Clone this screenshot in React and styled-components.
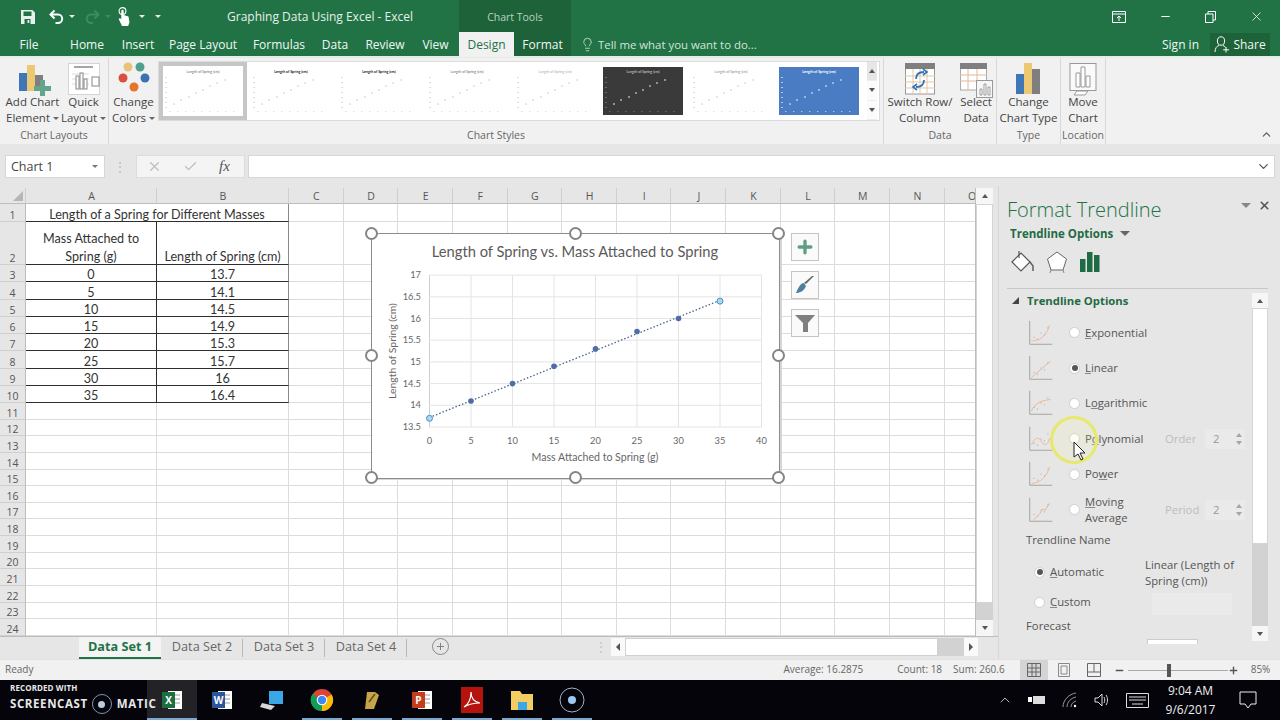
import React from 'react'
import styled, { createGlobalStyle } from 'styled-components'
import { Lightbulb, X, Minus, Plus, ChevronDown, ChevronUp, Check } from 'lucide-react'

const GlobalStyle = createGlobalStyle`
html, body { margin: 0; padding: 0; background: #000; }
* { box-sizing: border-box; }
body { font-family: "Open Sans", "Liberation Sans", sans-serif; }
`

const Window = styled.div`
width: 1280px;
height: 720px;
display: flex;
flex-direction: column;
overflow: hidden;
position: relative;
`

/* ---------- title bar and tabs ---------- */
const TitleBar = styled.div`
height: 33px;
background: #217346;
display: flex;
color: #fff;
font-size: 12px;
`
const Qat = styled.div`
width: 227px;
display: flex;
align-items: center;
padding-left: 21px;
`
const QatSlot = styled.span`
display: flex;
align-items: center;
margin-left: ${p => p.$ml || 0}px;
`
const TinyCaret = styled.span`
display: inline-block;
vertical-align: middle;
width: 0;
height: 0;
border-left: ${p => p.$size || 3}px solid transparent;
border-right: ${p => p.$size || 3}px solid transparent;
border-top: ${p => p.$size || 3}px solid ${p => p.$color || '#e8f2ec'};
margin-left: ${p => p.$ml || 0}px;
margin-right: ${p => p.$gap || 0}px;
`
const DocTitle = styled.div`
width: 232px;
line-height: 33px;
color: #e6f0ea;
`
const ChartTools = styled.div`
width: 112px;
background: #1d6239;
line-height: 34px;
text-align: center;
font-size: 10.5px;
color: #b9d3c3;
`
const WinControls = styled.div`
margin-left: auto;
display: flex;
align-items: center;
padding-right: 16px;
gap: 33px;
`
const TabBar = styled.div`
height: 23px;
background: #217346;
display: flex;
align-items: stretch;
color: #f1f7f3;
font-size: 12px;
`
const Tab = styled.div`
width: ${p => p.$w}px;
display: flex;
align-items: center;
justify-content: center;
background: ${p => p.$active ? '#f1f1f1' : p.$dark ? '#1d6239' : 'transparent'};
color: ${p => p.$active ? '#217346' : 'inherit'};
height: ${p => p.$active ? '25px' : 'auto'};
margin-top: ${p => p.$active ? '-1px' : '0'};
position: relative;
`
const TellMe = styled.div`
display: flex;
align-items: center;
gap: 3px;
margin-left: 9px;
font-size: 11.4px;
color: #d3e4da;
`
const SignIn = styled.div`
margin-left: auto;
line-height: 23px;
margin-right: 11px;
`
const Share = styled.div`
width: 60px;
margin-right: 10px;
background: #1d6239;
display: flex;
align-items: center;
justify-content: center;
gap: 3px;
`

/* ---------- ribbon ---------- */
const Ribbon = styled.div`
height: 88px;
background: #f1f1f1;
border-top: 2px solid #e3ece5;
display: flex;
color: #444;
font-size: 11.5px;
`
const Group = styled.div`
width: ${p => p.$w}px;
border-right: 1px solid #d8d8d8;
display: flex;
flex-direction: column;
`
const GroupBody = styled.div`
flex: 1;
display: flex;
padding-left: ${p => p.$pad || 0}px;
`
const GroupLabel = styled.div`
font-size: 10.5px;
text-align: center;
color: #666;
line-height: 17px;
height: 17px;
`
const RibbonBtn = styled.div`
width: ${p => p.$w}px;
display: flex;
flex-direction: column;
align-items: center;
text-align: center;
line-height: 16px;
white-space: nowrap;
`
const RibbonIcon = styled.div`
height: 36px;
padding-top: 4px;
display: flex;
justify-content: center;
`
const Gallery = styled.div`
width: 722px;
height: 60px;
margin-top: 3px;
background: #fff;
border: 1px solid #dcdcdc;
display: flex;
flex: none;
`
const ThumbSlot = styled.div`
width: 88px;
height: 58px;
display: flex;
align-items: center;
justify-content: center;
border: 4px solid ${p => p.$selected ? '#c6c6c6' : 'transparent'};
`
const GalleryScroll = styled.div`
flex: 1;
display: flex;
flex-direction: column;
padding: 0 2px 0 4px;
`
const GalleryBtn = styled.div`
flex: 1;
display: flex;
align-items: center;
justify-content: center;
background: ${p => p.$off ? '#e6e6e6' : '#fbfbfb'};
border-bottom: 1px solid #eee;
`
const Collapse = styled.div`
flex: 1;
display: flex;
align-items: flex-end;
justify-content: flex-end;
padding: 0 7px 3px 0;
`

/* ---------- formula bar ---------- */
const FormulaBar = styled.div`
height: 42px;
background: #e6e6e6;
display: flex;
align-items: center;
padding: 3px 5px 0;
color: #444;
`
const NameBox = styled.div`
width: 100px;
height: 23px;
background: #fff;
border: 1px solid #d6d6d6;
display: flex;
align-items: center;
justify-content: space-between;
padding: 0 6px 0 5px;
font-size: 12.5px;
`
const Grip = styled.div`
width: 31px;
display: flex;
justify-content: center;
color: #bbb;
font-size: 12px;
letter-spacing: 1px;
`
const FxBox = styled.div`
width: 109px;
height: 23px;
background: #f4f4f4;
border: 1px solid #dcdcdc;
display: flex;
align-items: center;
gap: 21px;
padding-left: 10px;
color: #bdbdbd;
`
const FxMark = styled.span`
font-family: "Liberation Serif", serif;
font-style: italic;
font-size: 15px;
color: #555;
`
const FormulaInput = styled.div`
flex: 1;
height: 23px;
margin-left: 3px;
background: #fff;
border: 1px solid #d6d6d6;
display: flex;
align-items: center;
justify-content: flex-end;
padding-right: 3px;
`

/* ---------- work area ---------- */
const Main = styled.div`
height: 473px;
display: flex;
position: relative;
`
const Workspace = styled.div`
width: 998px;
background: #e6e6e6;
display: flex;
flex-direction: column;
`
const SheetRow = styled.div`
height: 450px;
display: flex;
padding-top: 2px;
position: relative;
`
const SheetGrid = styled.div`
width: 976px;
height: 448px;
overflow: hidden;
display: grid;
grid-template-columns: 26px 131px 132px repeat(13, 54.65px);
grid-template-rows: 16px 17.5px 43.5px repeat(8, 17.25px) repeat(14, 16.64px);
background: #fff;
border-right: 1px solid #bdbdbd;
font-family: Lato, "Liberation Sans", sans-serif;
font-size: 12.6px;
color: #333;
`
const Corner = styled.div`
background: #e6e6e6;
border-right: 1px solid #cfcfcf;
border-bottom: 1px solid #bdbdbd;
position: relative;
&::after {
  content: '';
  position: absolute;
  right: 2px;
  bottom: 2px;
  border-left: 10px solid transparent;
  border-bottom: 10px solid #b6b6b6;
}
`
const ColHead = styled.div`
background: #e6e6e6;
border-right: 1px solid #cfcfcf;
border-bottom: 1px solid #bdbdbd;
text-align: center;
padding: 1px 0 0 1px;
font-family: "Open Sans", sans-serif;
font-size: 10.5px;
line-height: 15px;
color: #555;
`
const RowHead = styled.div`
background: #e6e6e6;
border-right: 1px solid #bdbdbd;
border-bottom: 1px solid #cfcfcf;
display: flex;
align-items: flex-end;
justify-content: center;
font-family: "Open Sans", sans-serif;
font-size: 10.5px;
line-height: 11px;
color: #555;
`
const Cell = styled.div`
border-right: 1px solid #dcdcdc;
border-bottom: 1px solid #dcdcdc;
`
const DataCell = styled.div`
grid-column: ${p => p.$span ? 'span 2' : 'auto'};
border-right: 1px solid ${p => p.$rule || '#2e2e2e'};
border-bottom: 1px solid #2e2e2e;
display: flex;
align-items: ${p => p.$top !== undefined ? 'flex-start' : 'flex-end'};
justify-content: center;
text-align: center;
line-height: ${p => p.$top !== undefined ? 18 : 13}px;
padding: ${p => p.$top || 0}px 4px 0;
`
const VScroll = styled.div`
width: 17px;
height: 448px;
background: #d2d2d2;
display: flex;
flex-direction: column;
`
const ScrollBtn = styled.div`
height: ${p => p.$h || 16}px;
flex: none;
display: flex;
align-items: center;
justify-content: center;
background: ${p => p.$bg || '#f6f6f6'};
`
const ScrollThumb = styled.div`
height: ${p => p.$h}px;
flex: none;
background: #fff;
border: 1px solid #d4d4d4;
`
const ScrollGap = styled.div`
flex: 1;
`
const Arrow = styled.span`
width: 0;
height: 0;
border-left: 3.5px solid transparent;
border-right: 3.5px solid transparent;
border-top: ${p => p.$up ? 'none' : '4px solid #555'};
border-bottom: ${p => p.$up ? '4px solid #555' : 'none'};
`
const SideArrow = styled.span`
width: 0;
height: 0;
border-top: 4px solid transparent;
border-bottom: 4px solid transparent;
border-left: ${p => p.$left ? 'none' : '4px solid #555'};
border-right: ${p => p.$left ? '4px solid #555' : 'none'};
`

/* ---------- chart overlay ---------- */
const ChartFrame = styled.div`
position: absolute;
left: 371px;
top: 47px;
width: 409px;
height: 246px;
background: #fff;
border: 1px solid #8c8c8c;
box-shadow: 2px 1px 0 #d6d6d6;
`
const Handle = styled.span`
position: absolute;
left: ${p => p.$x}%;
top: ${p => p.$y}%;
width: 13px;
height: 13px;
margin: -7px 0 0 -7px;
border-radius: 50%;
background: #fff;
border: 2px solid #858585;
`
const ChartTool = styled.div`
position: absolute;
left: 791px;
top: ${p => p.$top}px;
width: 28px;
height: 28px;
background: #fafafa;
border: 1px solid #c4c4c4;
display: flex;
align-items: center;
justify-content: center;
`

/* ---------- sheet tabs ---------- */
const SheetTabs = styled.div`
height: 23px;
display: flex;
align-items: stretch;
background: #e6e6e6;
border-top: 1px solid #bdbdbd;
font-size: 12.7px;
color: #666;
padding-left: 79px;
`
const SheetTab = styled.div`
width: 82px;
display: flex;
align-items: center;
justify-content: center;
padding-bottom: ${p => p.$active ? 3 : 5}px;
background: ${p => p.$active ? '#f4f4f4' : 'transparent'};
color: ${p => p.$active ? '#217346' : '#666'};
font-weight: ${p => p.$active ? 700 : 400};
border-bottom: ${p => p.$active ? '2px solid #217346' : 'none'};
position: relative;
&::after {
  content: '';
  display: ${p => p.$active ? 'none' : 'block'};
  position: absolute;
  right: 0;
  top: 2px;
  bottom: 2px;
  width: 1px;
  background: #b8b8b8;
}
`
const AddSheet = styled.div`
width: 17px;
height: 17px;
margin: 1px 0 0 25px;
border: 1px solid #888;
border-radius: 50%;
display: flex;
align-items: center;
justify-content: center;
`
const SheetDots = styled.div`
margin-left: 146px;
width: 16px;
color: #c4c4c4;
line-height: 20px;
font-size: 12px;
`
const HScroll = styled.div`
display: flex;
align-items: stretch;
height: 18px;
margin-top: 1px;
width: 367px;
`
const HThumb = styled.div`
flex: ${p => p.$grow};
background: ${p => p.$bg};
border: ${p => p.$bg === '#fff' ? '1px solid #d0d0d0' : 'none'};
`
const HBtn = styled.div`
width: 14px;
background: #fafafa;
display: flex;
align-items: center;
justify-content: center;
`

/* ---------- task pane ---------- */
const Panel = styled.div`
width: 282px;
background: #e6e6e6;
border-left: 1px solid #d6d6d6;
position: relative;
padding-left: 8px;
display: flex;
flex-direction: column;
color: #555;
font-size: 11.3px;
`
const PanelHead = styled.div`
height: 33px;
display: flex;
align-items: center;
padding-top: 13px;
padding-right: 9px;
`
const PanelTitle = styled.div`
font-size: 20px;
font-weight: 300;
color: #217346;
flex: 1;
white-space: nowrap;
`
const PanelActions = styled.div`
display: flex;
align-items: center;
gap: 7px;
margin-bottom: 8px;
`
const SubTitle = styled.div`
display: flex;
align-items: center;
gap: 7px;
height: 24px;
padding: 5px 0 0 3px;
font-weight: 700;
font-size: 11.5px;
color: #1f6b43;
`
const IconTabs = styled.div`
height: 38px;
display: flex;
align-items: center;
gap: 11px;
padding: 0 0 0 3px;
`
const ScrollArea = styled.div`
width: 261px;
margin-top: 7px;
height: 356px;
border-top: 1px solid #c8c8c8;
padding-top: 4px;
display: flex;
`
const PaneBody = styled.div`
width: 245px;
height: 351px;
overflow: hidden;
`
const SectionHead = styled.div`
height: 22px;
display: flex;
align-items: center;
gap: 8px;
padding: 0 0 7px 5px;
font-weight: 700;
color: #1f6b43;
`
const HeadTriangle = styled.span`
width: 0;
height: 0;
border-left: 7px solid transparent;
border-bottom: 7px solid #444;
`
const TrendRow = styled.div`
height: 35.4px;
display: flex;
align-items: center;
padding-left: 20px;
`
const Radio = styled.span`
width: 11px;
height: 11px;
flex: none;
border-radius: 50%;
background: #fff;
border: 1px solid #cfcfcf;
display: flex;
align-items: center;
justify-content: center;
margin-left: ${p => p.$ml ?? 14}px;
&::after {
  content: '';
  display: ${p => p.$on ? 'block' : 'none'};
  width: 6px;
  height: 6px;
  border-radius: 50%;
  background: #555;
}
`
const RadioLabel = styled.span`
width: 80px;
margin-left: 5px;
line-height: 16px;
flex: none;
`
const Key = styled.span`
text-decoration: underline;
text-decoration-color: #888;
`
const GhostLabel = styled.span`
width: 40px;
color: #bdbdbd;
`
const GhostSpin = styled.span`
width: 40px;
height: 20px;
background: #eaeaea;
color: #999;
display: flex;
align-items: center;
justify-content: space-between;
padding: 0 3px 0 8px;
`
const SpinMarks = styled.span`
display: flex;
flex-direction: column;
gap: 4px;
opacity: 0.45;
`
const FieldLabel = styled.div`
height: 18px;
line-height: 18px;
padding-left: 19px;
margin-top: 4px;
`
const NameBlock = styled.div`
display: flex;
padding-left: 27px;
height: 63px;
margin-top: 1px;
`
const NameChoices = styled.div`
width: 111px;
display: flex;
flex-direction: column;
padding-top: 7px;
flex: none;
`
const NameChoice = styled.div`
height: 30px;
flex: none;
display: flex;
align-items: center;
`
const NameText = styled.div`
width: 100px;
line-height: 16px;
padding-top: 7px;
`
const GhostField = styled.div`
width: 80px;
height: 22px;
margin: 4px 0 0 7px;
background: #eaeaea;
`
const ForecastStub = styled.div`
width: 51px;
height: 14px;
margin: 4px 0 0 140px;
background: #fff;
border: 1px solid #ccc;
`
const PaneScroll = styled.div`
width: 16px;
height: 348px;
display: flex;
flex-direction: column;
background: #d2d2d2;
`
const Highlight = styled.div`
position: absolute;
left: 51px;
top: 230px;
width: 48px;
height: 48px;
border-radius: 50%;
border: 3px solid #e6e96a;
background: rgba(240, 240, 170, 0.16);
pointer-events: none;
`
const CursorMark = styled.svg`
position: absolute;
left: 74px;
top: 255px;
pointer-events: none;
`

/* ---------- status bar and taskbar ---------- */
const StatusBar = styled.div`
height: 21px;
background: #f1f1f1;
border-top: 1px solid #e0e0e0;
display: flex;
align-items: center;
font-size: 10px;
color: #666;
padding-left: 5px;
`
const StatusText = styled.span`
margin-left: ${p => p.$ml}px;
padding-bottom: 2px;
white-space: nowrap;
`
const ViewBtn = styled.div`
width: 28px;
height: 21px;
margin-left: ${p => p.$ml || 0}px;
background: ${p => p.$on ? '#d4d4d4' : 'transparent'};
display: flex;
align-items: center;
justify-content: center;
`
const ZoomTrack = styled.div`
width: 100px;
height: 1px;
background: #aaa;
margin: 0 0 0 3px;
position: relative;
`
const ZoomThumb = styled.span`
position: absolute;
left: 39px;
top: -6px;
width: 4px;
height: 13px;
background: #555;
`
const TaskBar = styled.div`
height: 40px;
background: #04040a;
display: flex;
align-items: center;
color: #fff;
position: relative;
`
const Stamp = styled.div`
width: 147px;
height: 40px;
flex: none;
padding: 2px 0 0 10px;
font-weight: 700;
font-size: 8px;
line-height: 11px;
letter-spacing: 0.1px;
color: #e8e8e8;
white-space: nowrap;
position: relative;
z-index: 1;
`
const StampLine = styled.div`
display: flex;
align-items: center;
font-size: 11.5px;
font-weight: 700;
line-height: 22px;
letter-spacing: 0.6px;
`
const StampDot = styled.span`
width: 20px;
height: 20px;
flex: none;
border: 1px solid #7e97ad;
border-radius: 50%;
margin: 0 5px 0 4px;
display: flex;
align-items: center;
justify-content: center;
&::after {
  content: '';
  width: 7px;
  height: 7px;
  border-radius: 50%;
  background: #b5cde0;
}
`
const TaskIcon = styled.div`
width: 50px;
height: 40px;
flex: none;
display: flex;
align-items: center;
justify-content: center;
background: ${p => p.$active ? '#222227' : 'transparent'};
position: relative;
&::after {
  content: '';
  display: ${p => p.$open ? 'block' : 'none'};
  position: absolute;
  bottom: 0;
  height: 2px;
  left: ${p => p.$active ? 0 : 5}px;
  right: ${p => p.$active ? 0 : 5}px;
  background: #7da9d0;
}
`
const Tray = styled.div`
margin-left: auto;
display: flex;
align-items: center;
padding-right: 12px;
`
const TrayItem = styled.div`
width: ${p => p.$w}px;
display: flex;
justify-content: center;
`
const Clock = styled.div`
width: 75px;
text-align: center;
font-size: 12px;
line-height: 19px;
color: #eee;
margin-left: -4px;
`

/* ---------- drawings ---------- */
function SaveIcon() {
  return (
    <svg width="14" height="14" viewBox="0 0 14 14">
      <path d="M0 0h11.5L14 2.5V14H0z" fill="#e8f2ec" />
      <rect x="2.5" y="1.5" width="8" height="4.5" fill="#217346" />
      <rect x="3.5" y="9" width="6" height="5" fill="#217346" />
      <rect x="6.5" y="10" width="1.8" height="3" fill="#e8f2ec" />
    </svg>
  )
}

function UndoIcon() {
  return (
    <svg width="15" height="15" viewBox="0 0 15 15">
      <path d="M1.5 5.5h7.5a4.2 4.2 0 0 1 0 8.4H6.5" fill="none" stroke="#fff" strokeWidth="2" />
      <path d="M5.5 1.5l-4 4 4 4" fill="none" stroke="#fff" strokeWidth="2" />
    </svg>
  )
}

function RedoIcon() {
  return (
    <svg width="15" height="15" viewBox="0 0 15 15">
      <path d="M13.5 5.5H6a4.2 4.2 0 0 0 0 8.4h2" fill="none" stroke="#3f8a60" strokeWidth="2" />
      <path d="M9.5 1.5l4 4-4 4" fill="none" stroke="#3f8a60" strokeWidth="2" />
    </svg>
  )
}

function TouchIcon() {
  return (
    <svg width="12" height="20" viewBox="0 0 12 20">
      <circle cx="4.5" cy="4" r="3.4" fill="none" stroke="#fff" strokeWidth="1.1" />
      <path d="M3.3 4a1.2 1.2 0 0 1 2.4 0v4l4.8 1.4 1 6-1.4 3.6H4L.7 12l1.3-1 1.3 1.5z" fill="#fff" />
    </svg>
  )
}

function ShareUserIcon() {
  return (
    <svg width="16" height="17" viewBox="0 0 16 17">
      <ellipse cx="7" cy="5" rx="3.6" ry="4.2" fill="none" stroke="#fff" />
      <path d="M1 16c0-4 2-6 4-6.5M9 9.5c1 .3 2 1 2.4 2" fill="none" stroke="#fff" />
      <path d="M12 11v5.5M9.2 13.8H15" stroke="#fff" />
    </svg>
  )
}

function AddChartIcon() {
  return (
    <svg width="36" height="34" viewBox="0 0 36 34">
      <rect x="4" y="11" width="8" height="18" fill="#3f76b5" />
      <rect x="12" y="3" width="8" height="26" fill="#edc873" />
      <rect x="20" y="13" width="8" height="16" fill="#7f7f7f" />
      <path d="M25 18h5v6h6v5h-6v5h-5v-5h-6v-5h6z" fill="#62a58a" />
    </svg>
  )
}

function QuickLayoutIcon() {
  return (
    <svg width="34" height="34" viewBox="0 0 34 34">
      <rect x="1.5" y="1.5" width="31" height="31" fill="#fff" stroke="#d5d5d5" />
      <path d="M7 5h19" stroke="#888" strokeWidth="1.5" />
      <path d="M5 12h17M5 17h17M5 22h17" stroke="#ddd" />
      <rect x="9" y="14" width="3" height="13" fill="#fff" stroke="#888" />
      <rect x="13" y="11" width="3" height="16" fill="#fff" stroke="#888" />
      <rect x="17" y="17" width="3" height="10" fill="#fff" stroke="#888" />
      <rect x="25" y="15" width="7" height="9" fill="#fff" stroke="#888" />
    </svg>
  )
}

function ColorsIcon() {
  return (
    <svg width="32" height="32" viewBox="0 0 32 32">
      <circle cx="10" cy="5" r="4.5" fill="#e9c27a" />
      <circle cx="22" cy="5" r="4.5" fill="#4f9e8f" />
      <circle cx="5" cy="16" r="4.5" fill="#d9503c" />
      <circle cx="27" cy="16" r="4.5" fill="#3a73b4" />
      <circle cx="16" cy="25" r="4.5" fill="#e3762b" />
    </svg>
  )
}

function SwitchIcon() {
  return (
    <svg width="32" height="34" viewBox="0 0 32 34">
      <rect x="1.5" y="2" width="29" height="30" fill="#fff" stroke="#999" />
      <rect x="1" y="1" width="30" height="6" fill="#7f7f7f" />
      <path d="M1 14h30M1 20h30M1 26h30M9 7v25M16 7v25M23 7v25" stroke="#e3c6a4" />
      <path d="M20 10c-6 0-8 3-8 7M12 25c6 0 8-3 8-7" fill="none" stroke="#2f75b5" strokeWidth="1.8" />
      <path d="M19 7l4 3-4 3M13 22l-4 3 4 3" fill="none" stroke="#2f75b5" strokeWidth="1.6" />
    </svg>
  )
}

function SelectDataIcon() {
  return (
    <svg width="34" height="36" viewBox="0 0 34 36">
      <rect x="1.5" y="2" width="26" height="26" fill="#fff" stroke="#aaa" />
      <rect x="1" y="1" width="27" height="6" fill="#7f7f7f" />
      <path d="M1 13h27M1 19h27M9 7v21M18 7v21" stroke="#e3b899" />
      <rect x="17.5" y="18.5" width="16" height="17" fill="#f6f6f6" stroke="#999" />
      <path d="M21 33v-6h2v6zM25 33v-11h2v11zM29 33v-8h2v8z" fill="#fff" stroke="#888" strokeWidth="0.8" />
    </svg>
  )
}

function ChangeTypeIcon() {
  return (
    <svg width="30" height="34" viewBox="0 0 30 34">
      <rect x="2" y="12" width="8" height="20" fill="#3f76b5" />
      <rect x="10" y="1" width="8" height="31" fill="#edc873" />
      <rect x="18" y="7" width="8" height="25" fill="#7f7f7f" />
    </svg>
  )
}

function MoveChartIcon() {
  return (
    <svg width="30" height="34" viewBox="0 0 30 34">
      <rect x="2" y="1.5" width="26" height="27" fill="#fafafa" stroke="#999" />
      <path d="M8 25V11h4v14zM13 25V5h4v20zM18 25V14h4v11z" fill="#fff" stroke="#999" />
      <path d="M6 33h11l3-4H9z" fill="#fff" stroke="#999" />
    </svg>
  )
}

const thumbDots = [[11, 37], [18, 33], [26, 30], [33, 26], [40, 23], [47, 19], [54, 16], [62, 13]]
const thumbTicksY = [10, 15, 20, 25, 30, 35, 40]
const thumbTicksX = [6, 14, 22, 30, 38, 46, 54, 62, 70]

function Thumb({ bg = '#fff', dot = '#c0c6d2', title = '#666', weight = 400, tick = '#d6d6d6' }) {
  return (
    <svg width="80" height="48" viewBox="0 0 80 48">
      <rect width="80" height="48" fill={bg} />
      <text x="40" y="6" textAnchor="middle" fontSize="3.6" fontWeight={weight} fill={title} fontFamily="Lato, sans-serif">Length of Spring (cm)</text>
      {thumbTicksY.map(y => <rect key={y} x="2" y={y} width="2" height="0.8" fill={tick} />)}
      {thumbTicksX.map(x => <rect key={x} x={x} y="44" width="1.4" height="0.8" fill={tick} />)}
      {thumbDots.map(([x, y]) => <circle key={x} cx={x} cy={y} r="0.8" fill={dot} />)}
    </svg>
  )
}

const trendPaths = {
  exp: 'M3 24c9 0 16-4 21-18',
  linear: 'M3 26L25 7',
  log: 'M3 24c4-8 10-12 22-13',
  poly: 'M3 22c5-11 9-9 12-3 4 5 7 2 9-5',
  power: 'M3 26c10-1 17-7 21-19',
  moving: 'M5 27l7-7 4-6 3 1 5-8',
}

function TrendIcon({ kind }) {
  return (
    <svg width="28" height="26" viewBox="0 0 28 30" style={{ flex: 'none' }}>
      <path d="M1 1v27h26" fill="none" stroke="#9a9a9a" strokeWidth="1" />
      <path d={trendPaths[kind]} fill="none" stroke="#eeb18a" strokeWidth="1" />
      {[[6, 20], [10, 22], [14, 15], [18, 17], [22, 9]].map(([x, y]) => (
        <circle key={x} cx={x} cy={y} r="0.7" fill="#9aa8b8" />
      ))}
    </svg>
  )
}

function BucketIcon() {
  return (
    <svg width="24" height="24" viewBox="0 0 24 24">
      <path d="M2 12l9-9 9 9-9 9z" fill="#fff" stroke="#555" strokeWidth="1.2" />
      <path d="M9 1v7" stroke="#555" strokeWidth="1.2" />
      <path d="M20 12l3 4v5" fill="none" stroke="#666" strokeWidth="1.6" />
    </svg>
  )
}

function PentagonIcon() {
  return (
    <svg width="24" height="24" viewBox="0 0 24 24">
      <path d="M12 2l9.5 7-3.5 11H6L2.5 9z" fill="#fff" stroke="#666" strokeWidth="1" />
      <path d="M6 20l-1 3M18 20l1 3" stroke="#888" />
    </svg>
  )
}

function BarsIcon() {
  return (
    <svg width="20" height="22" viewBox="0 0 20 22">
      <path d="M0 8h5.5v13H0zM7 1h5.5v20H7zM14 4h5.5v17H14z" fill="#1f6b43" />
    </svg>
  )
}

function RestoreDisplayIcon() {
  return (
    <svg width="14" height="12" viewBox="0 0 14 12">
      <path d="M.5.5h13v11H.5zM.5 3h13M7 10V5M5 7l2-2 2 2" fill="none" stroke="#fff" />
    </svg>
  )
}

function RestoreIcon() {
  return (
    <svg width="11" height="12" viewBox="0 0 11 12">
      <path d="M.5 3h7.5v8.5H.5zM3 3V.5h7.5V9H8" fill="none" stroke="#fff" />
    </svg>
  )
}

const xAt = v => 429.5 + v * 8.3
const yAt = v => 427 - (v - 13.5) * 43.4
const points = [[0, 13.7], [5, 14.1], [10, 14.5], [15, 14.9], [20, 15.3], [25, 15.7], [30, 16], [35, 16.4]]
const yTicks = [13.5, 14, 14.5, 15, 15.5, 16, 16.5, 17]
const xTicks = [0, 5, 10, 15, 20, 25, 30, 35, 40]
const chartFont = 'Lato, "Liberation Sans", sans-serif'

function SpringChart() {
  return (
    <svg width="407" height="244" viewBox="372 234 407 244" style={{ display: 'block' }} fontFamily={chartFont}>
      <text x="575" y="257" textAnchor="middle" fontSize="14.7" fill="#5a5a5a">Length of Spring vs. Mass Attached to Spring</text>
      {xTicks.map(t => <line key={t} x1={xAt(t)} x2={xAt(t)} y1="275" y2="427" stroke={t === 0 ? '#cfcfcf' : '#e4e4e4'} />)}
      {yTicks.map(t => <line key={t} x1="429" x2="762" y1={yAt(t)} y2={yAt(t)} stroke="#e4e4e4" />)}
      {yTicks.map(t => <text key={t} x="421" y={yAt(t) + 3} textAnchor="end" fontSize="9.3" fill="#666">{t}</text>)}
      {xTicks.map(t => <text key={t} x={xAt(t)} y="444" textAnchor="middle" fontSize="9.3" fill="#666">{t}</text>)}
      <text x="595" y="461" textAnchor="middle" fontSize="10.6" fill="#666">Mass Attached to Spring (g)</text>
      <text transform="translate(396 351) rotate(-90)" textAnchor="middle" fontSize="10.4" fill="#666">Length of Spring (cm)</text>
      <line x1={xAt(0)} y1={yAt(13.72)} x2={xAt(35)} y2={yAt(16.42)} stroke="#4a5f8c" strokeWidth="1.3" strokeDasharray="1.5 2" />
      {points.map(([x, y], i) => {
        const edge = i === 0 || i === points.length - 1
        return <circle key={x} cx={xAt(x)} cy={yAt(y)} r={edge ? 3 : 2.8} fill={edge ? '#a9d8f5' : '#4f6ea8'} stroke={edge ? '#4f8ec2' : 'none'} strokeWidth="1" />
      })}
    </svg>
  )
}

function TinyTile({ bg, letter, side = '#fff' }) {
  return (
    <svg width="20" height="22" viewBox="0 0 20 22">
      <rect x="6" y="2" width="14" height="18" fill={side} />
      <path d="M11 6h7M11 10h7M11 14h7" stroke="#999" />
      <rect y="3" width="13" height="16" fill={bg} />
      <text x="6.5" y="15" textAnchor="middle" fontSize="10" fontWeight="700" fill="#fff" fontFamily="Open Sans, sans-serif">{letter}</text>
    </svg>
  )
}

function TaskIcons() {
  return (
    <>
      <TaskIcon $active $open><TinyTile bg="#1d6f42" letter="X" /></TaskIcon>
      <TaskIcon><TinyTile bg="#2b579a" letter="W" /></TaskIcon>
      <TaskIcon>
        <svg width="24" height="24" viewBox="0 0 24 24">
          <path d="M9 3h14v13H9z" fill="#3ba7e6" />
          <path d="M2 15l13 3-4 4-11-3z" fill="#d8d8d8" />
        </svg>
      </TaskIcon>
      <TaskIcon $open>
        <svg width="24" height="24" viewBox="0 0 24 24">
          <circle cx="12" cy="12" r="11" fill="#db4437" />
          <path d="M12 12L2.5 6A11 11 0 0 0 12 23z" fill="#0f9d58" />
          <path d="M12 12l9.6-5.5A11 11 0 0 1 12 23z" fill="#fbbc05" />
          <circle cx="12" cy="12" r="5.3" fill="#fff" />
          <circle cx="12" cy="12" r="4.2" fill="#4285f4" />
        </svg>
      </TaskIcon>
      <TaskIcon $open>
        <svg width="16" height="20" viewBox="0 0 16 20">
          <path d="M3 2h8l4 3-5 14H1z" fill="#c7a44a" />
          <path d="M5 12l6-8" stroke="#5a4a1a" strokeWidth="1.4" />
        </svg>
      </TaskIcon>
      <TaskIcon $open><TinyTile bg="#c43e1c" letter="P" /></TaskIcon>
      <TaskIcon $open>
        <svg width="22" height="26" viewBox="0 0 22 26">
          <rect width="22" height="26" fill="#b7130e" />
          <path d="M3 20c5-3 7-9 7-15 0 6 3 10 9 11-6 0-11 1-16 4z" fill="none" stroke="#fff" strokeWidth="1.2" />
        </svg>
      </TaskIcon>
      <TaskIcon $open>
        <svg width="24" height="22" viewBox="0 0 24 22">
          <path d="M1 2h9l2 3h11v16H1z" fill="#f3cd62" />
          <rect x="8" y="13" width="9" height="8" fill="#3ba7e6" />
        </svg>
      </TaskIcon>
      <TaskIcon $open>
        <svg width="26" height="26" viewBox="0 0 26 26">
          <circle cx="13" cy="13" r="12" fill="none" stroke="#9bb3c7" />
          <circle cx="13" cy="13" r="4" fill="#9cc9ee" />
        </svg>
      </TaskIcon>
    </>
  )
}

const columns = ['A', 'B', 'C', 'D', 'E', 'F', 'G', 'H', 'I', 'J', 'K', 'L', 'M', 'N', 'O']
const tableRows = [[0, 13.7], [5, 14.1], [10, 14.5], [15, 14.9], [20, 15.3], [25, 15.7], [30, 16], [35, 16.4]]
const handles = [[0, 0], [50, 0], [100, 0], [0, 50], [100, 50], [0, 100], [50, 100], [100, 100]]
const ribbonTabs = [['Home', 58], ['Insert', 44], ['Page Layout', 86], ['Formulas', 66], ['Data', 46], ['Review', 54], ['View', 47]]

function Blanks({ from = 3, row }) {
  return columns.slice(from - 1).map(c => <Cell key={row + c} />)
}

function Sheet() {
  const rows = []
  rows.push(
    <React.Fragment key="r1">
      <RowHead>1</RowHead>
      <DataCell $span $rule="#8a8a8a">Length of a Spring for Different Masses</DataCell>
      <Blanks row={1} />
    </React.Fragment>,
    <React.Fragment key="r2">
      <RowHead>2</RowHead>
      <DataCell $top={8.5}>Mass Attached to Spring (g)</DataCell>
      <DataCell $top={26.5} $rule="#8a8a8a">Length of Spring (cm)</DataCell>
      <Blanks row={2} />
    </React.Fragment>
  )
  tableRows.forEach(([mass, len], i) => {
    rows.push(
      <React.Fragment key={'d' + i}>
        <RowHead>{i + 3}</RowHead>
        <DataCell>{mass}</DataCell>
        <DataCell $rule="#8a8a8a">{len}</DataCell>
        <Blanks row={i + 3} />
      </React.Fragment>
    )
  })
  for (let n = 11; n <= 24; n++) {
    rows.push(
      <React.Fragment key={'e' + n}>
        <RowHead>{n}</RowHead>
        <Blanks from={1} row={n} />
      </React.Fragment>
    )
  }
  return (
    <SheetGrid>
      <Corner />
      {columns.map(c => <ColHead key={c}>{c}</ColHead>)}
      {rows}
    </SheetGrid>
  )
}

function OptionRow({ kind, label, on, ghost, value }) {
  return (
    <TrendRow>
      <TrendIcon kind={kind} />
      <Radio $on={on} />
      <RadioLabel>{label}</RadioLabel>
      {ghost && <GhostLabel>{ghost}</GhostLabel>}
      {ghost && (
        <GhostSpin>
          {value}
          <SpinMarks><Arrow $up /><Arrow /></SpinMarks>
        </GhostSpin>
      )}
    </TrendRow>
  )
}

export default function App() {
  return (
    <Window>
      <GlobalStyle />
      <TitleBar>
        <Qat>
          <QatSlot><SaveIcon /></QatSlot>
          <QatSlot $ml={14}><UndoIcon /></QatSlot>
          <TinyCaret $ml={5} />
          <QatSlot $ml={10}><RedoIcon /></QatSlot>
          <TinyCaret $ml={5} $color="#3f8a60" />
          <QatSlot $ml={7}><TouchIcon /></QatSlot>
          <TinyCaret $ml={9} />
          <TinyCaret $ml={10} />
        </Qat>
        <DocTitle>Graphing Data Using Excel - Excel</DocTitle>
        <ChartTools>Chart Tools</ChartTools>
        <WinControls>
          <RestoreDisplayIcon />
          <Minus size={13} color="#fff" />
          <RestoreIcon />
          <X size={15} color="#fff" strokeWidth={1.2} />
        </WinControls>
      </TitleBar>
      <TabBar>
        <Tab $w={58}>File</Tab>
        {ribbonTabs.map(([name, w]) => <Tab key={name} $w={w}>{name}</Tab>)}
        <Tab $w={55} $active>Design</Tab>
        <Tab $w={57} $dark>Format</Tab>
        <TellMe>
          <Lightbulb size={15} strokeWidth={1.3} />
          Tell me what you want to do...
        </TellMe>
        <SignIn>Sign in</SignIn>
        <Share><ShareUserIcon />Share</Share>
      </TabBar>
      <Ribbon>
        <Group $w={109}>
          <GroupBody $pad={3}>
            <RibbonBtn $w={59}>
              <RibbonIcon><AddChartIcon /></RibbonIcon>
              <span>Add Chart</span>
              <span>Element <TinyCaret $color="#666" /></span>
            </RibbonBtn>
            <RibbonBtn $w={43}>
              <RibbonIcon><QuickLayoutIcon /></RibbonIcon>
              <span>Quick</span>
              <span>Layout <TinyCaret $color="#666" /></span>
            </RibbonBtn>
          </GroupBody>
          <GroupLabel>Chart Layouts</GroupLabel>
        </Group>
        <Group $w={775}>
          <GroupBody>
            <RibbonBtn $w={49}>
              <RibbonIcon><ColorsIcon /></RibbonIcon>
              <span>Change</span>
              <span>Colors <TinyCaret $color="#666" /></span>
            </RibbonBtn>
            <Gallery>
              <ThumbSlot $selected><Thumb /></ThumbSlot>
              <ThumbSlot><Thumb weight={700} title="#222" /></ThumbSlot>
              <ThumbSlot><Thumb weight={700} title="#222" /></ThumbSlot>
              <ThumbSlot><Thumb /></ThumbSlot>
              <ThumbSlot><Thumb title="#aaa" /></ThumbSlot>
              <ThumbSlot><Thumb bg="#3a3a3a" title="#ddd" dot="#fff" tick="#777" /></ThumbSlot>
              <ThumbSlot><Thumb title="#888" /></ThumbSlot>
              <ThumbSlot><Thumb bg="#4a7cc4" title="#fff" dot="#fff" weight={700} tick="#cddcf0" /></ThumbSlot>
              <GalleryScroll>
                <GalleryBtn $off><Arrow $up /></GalleryBtn>
                <GalleryBtn><Arrow /></GalleryBtn>
                <GalleryBtn><Arrow /></GalleryBtn>
              </GalleryScroll>
            </Gallery>
          </GroupBody>
          <GroupLabel>Chart Styles</GroupLabel>
        </Group>
        <Group $w={113}>
          <GroupBody>
            <RibbonBtn $w={72}>
              <RibbonIcon><SwitchIcon /></RibbonIcon>
              <span>Switch Row/</span>
              <span>Column</span>
            </RibbonBtn>
            <RibbonBtn $w={40}>
              <RibbonIcon><SelectDataIcon /></RibbonIcon>
              <span>Select</span>
              <span>Data</span>
            </RibbonBtn>
          </GroupBody>
          <GroupLabel>Data</GroupLabel>
        </Group>
        <Group $w={64}>
          <GroupBody>
            <RibbonBtn $w={63}>
              <RibbonIcon><ChangeTypeIcon /></RibbonIcon>
              <span>Change</span>
              <span>Chart Type</span>
            </RibbonBtn>
          </GroupBody>
          <GroupLabel>Type</GroupLabel>
        </Group>
        <Group $w={45}>
          <GroupBody>
            <RibbonBtn $w={44}>
              <RibbonIcon><MoveChartIcon /></RibbonIcon>
              <span>Move</span>
              <span>Chart</span>
            </RibbonBtn>
          </GroupBody>
          <GroupLabel>Location</GroupLabel>
        </Group>
        <Collapse><ChevronUp size={13} color="#555" /></Collapse>
      </Ribbon>
      <FormulaBar>
        <NameBox>Chart 1<TinyCaret $color="#777" /></NameBox>
        <Grip>⋮</Grip>
        <FxBox>
          <X size={15} />
          <Check size={15} />
          <FxMark>fx</FxMark>
        </FxBox>
        <FormulaInput><ChevronDown size={15} color="#555" /></FormulaInput>
      </FormulaBar>
      <Main>
        <Workspace>
          <SheetRow>
            <Sheet />
            <VScroll>
              <ScrollBtn><Arrow $up /></ScrollBtn>
              <ScrollThumb $h={399} />
              <ScrollGap />
              <ScrollBtn><Arrow /></ScrollBtn>
            </VScroll>
            <ChartFrame>
              <SpringChart />
              {handles.map(([x, y]) => <Handle key={x + '-' + y} $x={x} $y={y} />)}
            </ChartFrame>
            <ChartTool $top={47}><Plus size={20} color="#5f9e83" strokeWidth={4} /></ChartTool>
            <ChartTool $top={85}>
              <svg width="20" height="20" viewBox="0 0 20 20">
                <path d="M19 1l-8 8-2-1 8-7z" fill="#666" />
                <path d="M9 8c-3 0-5 3-8 10 4 0 8-2 10-7z" fill="#4d7f9f" />
              </svg>
            </ChartTool>
            <ChartTool $top={123}>
              <svg width="20" height="20" viewBox="0 0 20 20">
                <path d="M0 2h20l-7 8v9H8v-9z" fill="#7f7f7f" />
              </svg>
            </ChartTool>
          </SheetRow>
          <SheetTabs>
            <SheetTab $active>Data Set 1</SheetTab>
            <SheetTab>Data Set 2</SheetTab>
            <SheetTab>Data Set 3</SheetTab>
            <SheetTab>Data Set 4</SheetTab>
            <AddSheet><Plus size={11} color="#777" /></AddSheet>
            <SheetDots>⋮</SheetDots>
            <HScroll>
              <HBtn><SideArrow $left /></HBtn>
              <HThumb $grow={310} $bg="#fff" />
              <HThumb $grow={26} $bg="#d2d2d2" />
              <HBtn><SideArrow /></HBtn>
            </HScroll>
          </SheetTabs>
        </Workspace>
        <Panel>
          <PanelHead>
            <PanelTitle>Format Trendline</PanelTitle>
            <PanelActions>
              <TinyCaret $color="#888" $size={5} />
              <X size={13} color="#555" strokeWidth={3} />
            </PanelActions>
          </PanelHead>
          <SubTitle>Trendline Options <TinyCaret $color="#666" $size={5} /></SubTitle>
          <IconTabs>
            <BucketIcon />
            <PentagonIcon />
            <BarsIcon />
          </IconTabs>
          <ScrollArea>
            <PaneBody>
              <SectionHead><HeadTriangle />Trendline Options</SectionHead>
              <OptionRow kind="exp" label={<><Key>E</Key>xponential</>} />
              <OptionRow kind="linear" on label={<><Key>L</Key>inear</>} />
              <OptionRow kind="log" label={<>L<Key>o</Key>garithmic</>} />
              <OptionRow kind="poly" label={<>P<Key>o</Key>lynomial</>} ghost="Order" value="2" />
              <OptionRow kind="power" label={<>Po<Key>w</Key>er</>} />
              <OptionRow kind="moving" label={<><Key>M</Key>oving<br />Average</>} ghost="Period" value="2" />
              <FieldLabel>Trendline Name</FieldLabel>
              <NameBlock>
                <NameChoices>
                  <NameChoice><Radio $on $ml={0} /><RadioLabel><Key>A</Key>utomatic</RadioLabel></NameChoice>
                  <NameChoice><Radio $ml={0} /><RadioLabel><Key>C</Key>ustom</RadioLabel></NameChoice>
                </NameChoices>
                <div>
                  <NameText>Linear (Length of Spring (cm))</NameText>
                  <GhostField />
                </div>
              </NameBlock>
              <FieldLabel>Forecast</FieldLabel>
              <ForecastStub />
            </PaneBody>
            <PaneScroll>
              <ScrollBtn $h={15}><Arrow $up /></ScrollBtn>
              <ScrollThumb $h={236} />
              <ScrollGap />
              <ScrollBtn $h={15}><Arrow /></ScrollBtn>
            </PaneScroll>
          </ScrollArea>
          <Highlight />
          <CursorMark width="14" height="20" viewBox="0 0 14 20">
            <path d="M1 1v15l4-3 3 6 2-1-3-6h5z" fill="#fff" stroke="#222" strokeWidth="1" />
          </CursorMark>
        </Panel>
      </Main>
      <StatusBar>
        <StatusText $ml={0}>Ready</StatusText>
        <StatusText $ml={750}>Average: 16.2875</StatusText>
        <StatusText $ml={34}>Count: 18</StatusText>
        <StatusText $ml={11}>Sum: 260.6</StatusText>
        <ViewBtn $on $ml={15}>
          <svg width="14" height="14" viewBox="0 0 14 14">
            <path d="M.5.5h13v13H.5zM5 .5v13M9 .5v13M.5 5h13M.5 9h13" fill="none" stroke="#666" />
          </svg>
        </ViewBtn>
        <ViewBtn $ml={2}>
          <svg width="14" height="14" viewBox="0 0 14 14">
            <path d="M1.5.5h11v13h-11zM4 3h6v8H4z" fill="none" stroke="#888" />
          </svg>
        </ViewBtn>
        <ViewBtn $ml={2}>
          <svg width="14" height="14" viewBox="0 0 14 14">
            <path d="M.5.5h13v13H.5zM.5 9h13M7 .5V9" fill="none" stroke="#666" />
          </svg>
        </ViewBtn>
        <Minus size={11} color="#555" strokeWidth={3} style={{ marginLeft: 6 }} />
        <ZoomTrack><ZoomThumb /></ZoomTrack>
        <Plus size={11} color="#555" strokeWidth={3} />
        <StatusText $ml={12}>85%</StatusText>
      </StatusBar>
      <TaskBar>
        <Stamp>
          RECORDED WITH
          <StampLine>SCREENCAST<StampDot />MATIC</StampLine>
        </Stamp>
        <TaskIcons />
        <Tray>
          <TrayItem $w={30}><ChevronUp size={16} color="#ddd" strokeWidth={1.2} /></TrayItem>
          <TrayItem $w={33}>
            <svg width="18" height="12" viewBox="0 0 18 12">
              <path d="M5 2h12v8H5z" fill="#ddd" />
              <path d="M0 3h4v5H0z" fill="#fff" />
            </svg>
          </TrayItem>
          <TrayItem $w={33}>
            <svg width="16" height="16" viewBox="0 0 16 16">
              <path d="M1 15C1 8 7 2 14 1M5 15c0-5 4-9 9-10M9 15c0-3 2-5 5-6" fill="none" stroke="#999" />
              <circle cx="13" cy="14" r="1.2" fill="#fff" />
            </svg>
          </TrayItem>
          <TrayItem $w={31}>
            <svg width="16" height="16" viewBox="0 0 16 16">
              <path d="M1 6h3l4-4v12l-4-4H1zM10 5c1 2 1 4 0 6M12 3c2 3 2 7 0 10" fill="none" stroke="#ddd" />
            </svg>
          </TrayItem>
          <TrayItem $w={40}>
            <svg width="23" height="15" viewBox="0 0 23 15">
              <path d="M.5.5h22v14H.5zM3 4h17M3 7h17M6 11h11" fill="none" stroke="#ddd" />
            </svg>
          </TrayItem>
          <Clock>9:04 AM<br />9/6/2017</Clock>
          <TrayItem $w={40}>
            <svg width="18" height="18" viewBox="0 0 18 18">
              <path d="M1 1h16v12h-5l-3 4-3-4H1z" fill="none" stroke="#eee" />
            </svg>
          </TrayItem>
        </Tray>
      </TaskBar>
    </Window>
  )
}
